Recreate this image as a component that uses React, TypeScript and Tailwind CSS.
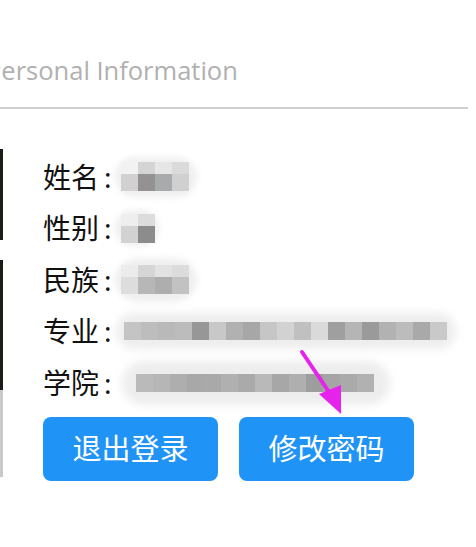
import React from "react";

type Cell = string;

// mosaic rows of the blurred values (each cell 17px wide)
const mosaics: { top: Cell[]; bottom: Cell[]; halo: string }[] = [
  {
    top: ["#f2f2f2", "#d4d4d4", "#e6e6e6", "#dadada"],
    bottom: ["#d2d0d0", "#939191", "#a9aaab", "#d0d0d0"],
    halo: "w-[82px] h-[40px]",
  },
  {
    top: ["#eeeeee", "#dcdcdc"],
    bottom: ["#d2d2d2", "#8c8c8c"],
    halo: "w-[44px] h-[36px]",
  },
  {
    top: ["#ececec", "#d6d6d6", "#e2e2e2", "#dcdcdc"],
    bottom: ["#dddddd", "#b7b7b7", "#aeaeae", "#c2c2c2"],
    halo: "w-[82px] h-[44px]",
  },
];

const major = [
  "#c4c4c4", "#bdbdbd", "#b9b9b9", "#bcbcbc", "#979797", "#c8c8c8", "#b1b1b1",
  "#a7a7a7", "#c6c6c6", "#d2d2d2", "#c0c0c0", "#dadada", "#9f9f9f", "#b5b5b5",
  "#9a9a9a", "#b2b2b2", "#bcbcbc", "#a9a9a9", "#c9c9c9",
];

const college = [
  "#bababa", "#b6b6b6", "#aeaeae", "#a8a8a8", "#a9a9a9", "#b0b0b0", "#aaaaaa",
  "#b9b9b9", "#a7a7a7", "#afafaf", "#9d9d9d", "#a5a5a5", "#aaaaaa", "#b1b1b1",
];

function SmallMosaic({ m }: { m: (typeof mosaics)[number] }) {
  return (
    <div className="relative ml-[9px] flex items-center">
      <div className={`absolute -left-[6px] rounded-full bg-[#efefef] blur-[3px] ${m.halo}`} />
      <div className="relative flex flex-col blur-[0.6px]">
        <div className="flex h-[12px]">
          {m.top.map((c, i) => (
            <div key={i} className="w-[17px]" style={{ background: c }} />
          ))}
        </div>
        <div className="flex h-[17px]">
          {m.bottom.map((c, i) => (
            <div key={i} className="w-[17px]" style={{ background: c }} />
          ))}
        </div>
      </div>
    </div>
  );
}

function LongMosaic({ cells, halo, offset }: { cells: string[]; halo: string; offset: string }) {
  return (
    <div className={`relative flex items-center ${offset}`}>
      <div className={`absolute rounded-full bg-[#ededed] blur-[4px] ${halo}`} />
      <div className="relative flex h-[18px] blur-[0.6px]">
        {cells.map((c, i) => (
          <div key={i} className="w-[17px]" style={{ background: c }} />
        ))}
      </div>
    </div>
  );
}

function Row({ label, children }: { label: string; children: React.ReactNode }) {
  return (
    <div className="flex h-[51.5px] items-center">
      <span className="text-[28px] leading-none text-[#111]">{label}</span>
      <span className="ml-[5px] text-[28px] leading-none text-[#111]">:</span>
      {children}
    </div>
  );
}

export default function App() {
  return (
    <div
      className="relative h-[547px] w-[476px] overflow-hidden bg-white"
      style={{ fontFamily: '"Noto Sans", "Noto Sans CJK SC", sans-serif' }}
    >
      {/* Header */}
      <div className="w-[468px] border-b-2 border-[#cfcfcf] pt-[50px] pb-[17px]">
        <h1
          className="-ml-[14px] whitespace-nowrap text-[25.5px] leading-[40px] font-normal text-[#b0b0b0]"
          style={{ fontFamily: '"Open Sans", sans-serif' }}
        >
          Personal Information
        </h1>
      </div>

      <div className="flex pt-[40px]">
        {/* left edge of neighbouring panel */}
        <div className="flex w-[3px] flex-col">
          <div className="h-[91px] bg-[#1b1c16]" />
          <div className="h-[20px]" />
          <div className="h-[130px] bg-[#1b1c16]" />
          <div className="h-[87px] bg-[#c9c9c9]" />
        </div>

        <div className="ml-[40px] flex flex-col pt-[2px]">
          <Row label="姓名">
            <SmallMosaic m={mosaics[0]} />
          </Row>
          <Row label="性别">
            <SmallMosaic m={mosaics[1]} />
          </Row>
          <Row label="民族">
            <SmallMosaic m={mosaics[2]} />
          </Row>
          <Row label="专业">
            <LongMosaic cells={major} halo="-left-[8px] w-[340px] h-[36px]" offset="ml-[12px]" />
          </Row>
          <Row label="学院">
            <LongMosaic cells={college} halo="-left-[14px] w-[268px] h-[44px]" offset="ml-[24px]" />
          </Row>

          <div className="mt-[8px] flex gap-[21px]">
            <button className="h-[64px] w-[175px] rounded-[8px] bg-[#1f93f6] text-[29px] text-white">
              退出登录
            </button>
            <button className="h-[64px] w-[175px] rounded-[8px] bg-[#1f93f6] text-[29px] text-white">
              修改密码
            </button>
          </div>
        </div>
      </div>

      {/* annotation arrow */}
      <svg className="absolute left-0 top-0" width="476" height="547" viewBox="0 0 476 547">
        <path d="M302 352 L331 395" stroke="#e623ea" strokeWidth="4" strokeLinecap="round" />
        <path d="M319 394 L341 414 L341 385 Z" fill="#e623ea" />
      </svg>
    </div>
  );
}
